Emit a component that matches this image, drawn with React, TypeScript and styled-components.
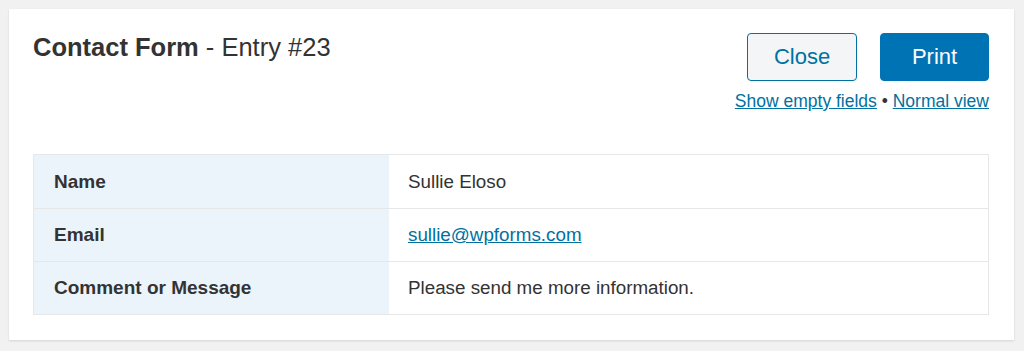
import React from "react";
import styled, { createGlobalStyle } from "styled-components";

const Global = createGlobalStyle`
  html, body { margin: 0; padding: 0; background: #f1f1f1; }
  body { font-family: "Liberation Sans", Arial, Helvetica, sans-serif; color: #333; }
  * { box-sizing: border-box; }
`;

const Page = styled.div`
  padding: 9px 10px 11px 9px;
`;

const Card = styled.div`
  background: #fff;
  box-shadow: 0 1px 2px rgba(0, 0, 0, 0.12);
  padding: 24px 25px 25px 24px;
`;

const Header = styled.div`
  display: flex;
  justify-content: space-between;
  align-items: flex-start;
`;

const Title = styled.h1`
  margin: 0;
  font-size: 25.5px;
  font-weight: 400;
  line-height: 29px;
  color: #333;
  strong { font-weight: 700; }
`;

const Actions = styled.div`
  display: flex;
  flex-direction: column;
  align-items: flex-end;
`;

const Buttons = styled.div`
  display: flex;
  gap: 23px;
`;

const Button = styled.button<{ $primary?: boolean }>`
  height: 48px;
  width: ${(p) => (p.$primary ? "109px" : "110px")};
  border-radius: 4px;
  border: 1px solid ${(p) => (p.$primary ? "#0073b5" : "#0071a1")};
  background: ${(p) => (p.$primary ? "#0073b5" : "#f3f5f6")};
  color: ${(p) => (p.$primary ? "#fff" : "#0071a1")};
  font-family: "Liberation Sans", Arial, sans-serif;
  font-size: 22px;
  padding: 0;
  cursor: pointer;
`;

const Links = styled.div`
  margin-top: 10px;
  font-size: 17.5px;
  line-height: 20px;
  color: #333;
  white-space: nowrap;
`;

const Link = styled.a`
  color: #0071a1;
  text-decoration: underline;
`;

const Table = styled.div`
  margin-top: 43px;
  border: 1px solid #e7e7e7;
`;

const Row = styled.div`
  display: grid;
  grid-template-columns: 355px 1fr;
  height: 53px;
  & + & { border-top: 1px solid #e7e7e7; }
`;

const Label = styled.div`
  background: #ebf3fb;
  display: flex;
  align-items: center;
  padding-left: 20px;
  font-weight: 700;
  font-size: 19px;
  color: #333;
`;

const Value = styled.div`
  display: flex;
  align-items: center;
  padding-left: 19px;
  font-size: 18.8px;
  color: #333;
  a { color: #0071a1; }
`;

const rows: { label: string; value: React.ReactNode }[] = [
  { label: "Name", value: "Sullie Eloso" },
  { label: "Email", value: <a href="#">sullie@wpforms.com</a> },
  { label: "Comment or Message", value: "Please send me more information." },
];

export default function App() {
  return (
    <Page>
      <Global />
      <Card>
        <Header>
          <Title>
            <strong>Contact Form</strong> - Entry #23
          </Title>
          <Actions>
            <Buttons>
              <Button>Close</Button>
              <Button $primary>Print</Button>
            </Buttons>
            <Links>
              <Link href="#">Show empty fields</Link> • <Link href="#">Normal view</Link>
            </Links>
          </Actions>
        </Header>
        <Table>
          {rows.map((r) => (
            <Row key={r.label}>
              <Label>{r.label}</Label>
              <Value>{r.value}</Value>
            </Row>
          ))}
        </Table>
      </Card>
    </Page>
  );
}
